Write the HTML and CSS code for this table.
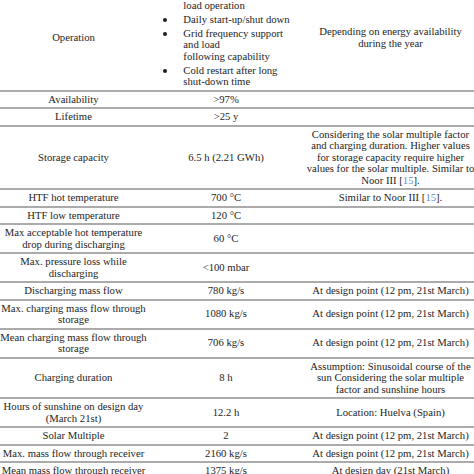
FILE: index.html
```html
<!DOCTYPE html>
<html>
<head>
<meta charset="utf-8">
<link rel="stylesheet" href="styles.css">
</head>
<body>
<div class="page">
<table class="spec">
<colgroup><col class="c1"><col class="c2"><col class="c3"></colgroup>
<tbody>
<tr class="op">
<td>Operation</td>
<td>
<ul class="bullets">
<li><span class="dot"></span><span>Continuous base<br>load operation</span></li>
<li><span class="dot"></span><span>Daily start-up/shut down</span></li>
<li><span class="dot"></span><span>Grid frequency support<br>and load<br>following capability</span></li>
<li><span class="dot"></span><span>Cold restart after long<br>shut-down time</span></li>
</ul>
</td>
<td>Depending on energy availability<br>during the year</td>
</tr>
<tr><td>Availability</td><td>&gt;97%</td><td></td></tr>
<tr><td>Lifetime</td><td>&gt;25 y</td><td></td></tr>
<tr class="tall"><td>Storage capacity</td><td>6.5 h (2.21 GWh)</td><td>Considering the solar multiple factor<br>and charging duration. Higher values<br>for storage capacity require higher<br>values for the solar multiple. Similar to<br>Noor III [<a class="ref">15</a>].</td></tr>
<tr><td>HTF hot temperature</td><td>700 °C</td><td>Similar to Noor III [<a class="ref">15</a>].</td></tr>
<tr><td>HTF low temperature</td><td>120 °C</td><td></td></tr>
<tr><td>Max acceptable hot temperature<br>drop during discharging</td><td>60 °C</td><td></td></tr>
<tr><td>Max. pressure loss while<br>discharging</td><td>&lt;100 mbar</td><td></td></tr>
<tr><td>Discharging mass flow</td><td>780 kg/s</td><td>At design point (12 pm, 21st March)</td></tr>
<tr><td>Max. charging mass flow through<br>storage</td><td>1080 kg/s</td><td>At design point (12 pm, 21st March)</td></tr>
<tr><td>Mean charging mass flow through<br>storage</td><td>706 kg/s</td><td>At design point (12 pm, 21st March)</td></tr>
<tr><td>Charging duration</td><td>8 h</td><td>Assumption: Sinusoidal course of the<br>sun Considering the solar multiple<br>factor and sunshine hours</td></tr>
<tr><td>Hours of sunshine on design day<br>(March 21st)</td><td>12.2 h</td><td>Location: Huelva (Spain)</td></tr>
<tr><td>Solar Multiple</td><td>2</td><td>At design point (12 pm, 21st March)</td></tr>
<tr><td>Max. mass flow through receiver</td><td>2160 kg/s</td><td>At design point (12 pm, 21st March)</td></tr>
<tr><td>Mean mass flow through receiver</td><td>1375 kg/s</td><td>At design day (21st March)</td></tr>
</tbody>
</table>
</div>
</body>
</html>
```
FILE: styles.css
```css
html, body {
  margin: 0;
  padding: 0;
  background: #fff;
}
.page {
  width: 474px;
  height: 474px;
  overflow: hidden;
}
.spec {
  width: 480px;
  margin: -14px 0 0 -2px;
  border-collapse: collapse;
  table-layout: fixed;
  font-family: "Liberation Serif", "Times New Roman", serif;
  font-size: 10.7px;
  line-height: 11.5px;
  color: #1e1e1e;
}
.c1 { width: 151px; }
.c2 { width: 154px; }
.c3 { width: 175px; }
.spec td {
  padding: 2px 2px;
  text-align: center;
  vertical-align: middle;
  border-bottom: 2px solid #ababab;
  white-space: nowrap;
}
.bullets {
  display: table;
  list-style: none;
  margin: 0 auto;
  padding: 0;
  text-align: left;
}
.bullets li {
  display: flex;
  margin-bottom: 2.5px;
}
.bullets li:last-child { margin-bottom: 0; }
.dot {
  flex: none;
  width: 21px;
  position: relative;
}
.dot::before {
  content: "";
  position: absolute;
  left: 1px;
  top: 4px;
  width: 4px;
  height: 4px;
  border-radius: 50%;
  background: #1e1e1e;
}
.ref { color: #5b8fd0; }
```
